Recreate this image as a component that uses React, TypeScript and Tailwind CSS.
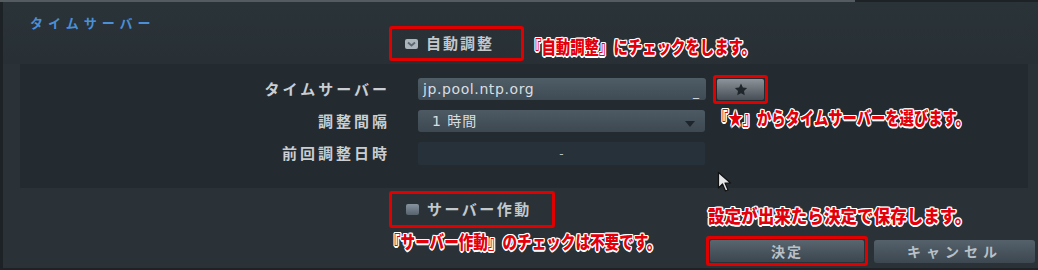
import React from 'react';

const ui = "font-['Noto_Sans_CJK_JP',sans-serif]";
const latin = "font-['DejaVu_Sans','Noto_Sans_CJK_JP',sans-serif]";
const note =
  "inline-block origin-left font-['Noto_Sans_CJK_JP',sans-serif] font-black text-[18px] leading-[20px] text-[#e3000b] whitespace-nowrap [text-shadow:1.5px_0_#fff,-1.5px_0_#fff,0_1.5px_#fff,0_-1.5px_#fff,1px_1px_#fff,-1px_-1px_#fff,1px_-1px_#fff,-1px_1px_#fff]";

const CheckOn = () => (
  <svg width="13" height="10" viewBox="0 0 13 10">
    <rect x="0" y="0" width="13" height="10" rx="2" fill="#aab4bc" />
    <path d="M3 3.5 L6.5 6.5 L10 3.5" fill="none" stroke="#5b666e" strokeWidth="1.8" />
  </svg>
);

const CheckOff = () => (
  <svg width="13" height="11" viewBox="0 0 13 11">
    <defs>
      <linearGradient id="cb" x1="0" y1="0" x2="0" y2="1">
        <stop offset="0" stopColor="#8694a0" />
        <stop offset="1" stopColor="#56626c" />
      </linearGradient>
    </defs>
    <rect x="0" y="0" width="13" height="11" rx="2" fill="url(#cb)" />
  </svg>
);

const Star = () => (
  <svg width="14" height="13" viewBox="0 0 24 23">
    <path d="M12 1l3.3 6.9 7.5 1-5.5 5.2 1.4 7.5L12 18l-6.7 3.6 1.4-7.5L1.2 8.9l7.5-1z" fill="#1f272d" />
  </svg>
);

const Cursor = () => (
  <svg width="16" height="22" viewBox="0 0 16 22">
    <path d="M1.5 1.5 L1.5 17 L5.5 13 L8.5 20 L11 19 L8 12 L13.5 12 Z" fill="#e4e6e8" stroke="#111" strokeWidth="1.2" strokeLinejoin="round" />
  </svg>
);

const Label = ({ children }: { children: React.ReactNode }) => (
  <div className={`${ui} w-[370px] text-right text-[15px] font-bold tracking-[3px] text-[#caced2]`}>{children}</div>
);

export default function App() {
  return (
    <div className="w-[1038px] h-[270px] bg-[#2a3237] overflow-hidden flex flex-col relative">
      <div className="h-[2px] flex">
        <div className="w-[855px] bg-[#545c62]" />
        <div className="flex-1 bg-[#1c2226]" />
      </div>

      <div className="flex-1 flex flex-col border-l-[3px] border-[#1c2226]">
        {/* header */}
        <div className="h-[62px] flex bg-gradient-to-b from-[#2a3338] to-[#283035]">
          <div className={`${ui} w-[386px] pl-[27px] pt-[14px] text-[13px] leading-[14px] font-bold tracking-[5px] text-[#4b8fd6]`}>
            タイムサーバー
          </div>
          <div className="mt-[24px] w-[135px] h-[35px] border-[3px] border-[#e10000] rounded-[3px] flex items-center pl-[13px] gap-[8px]">
            <CheckOn />
            <span className={`${ui} text-[15px] font-bold tracking-[2px] text-[#c3c8cc]`}>自動調整</span>
          </div>
          <div className="mt-[34px] ml-[3px]">
            <span className={`${note} scale-x-[0.8]`}>『自動調整』にチェックをします。</span>
          </div>
        </div>

        {/* panel */}
        <div className="ml-[17px] w-[1008px] h-[124px] bg-[#232b30] pt-[14px] flex flex-col gap-[10px] relative">
          <div className="flex items-center h-[22px]">
            <Label>タイムサーバー</Label>
            <div className="ml-[28px] w-[288px] h-[22px] rounded-[3px] bg-gradient-to-b from-[#4f5d67] to-[#3f4b54] flex items-center justify-between pl-[5px] pr-[7px]">
              <span className={`${latin} text-[14px] tracking-[0.6px] text-[#d9dee1]`}>jp.pool.ntp.org</span>
              <span className={`${latin} text-[12px] self-end leading-[16px] text-[#d9dee1]`}>_</span>
            </div>
            <div className="ml-[7px] w-[55px] h-[29px] border-[3px] border-[#e10000] rounded-[3px] p-[1px] flex">
              <div className="flex-1 rounded-[2px] bg-gradient-to-b from-[#8d949a] to-[#474e55] flex items-center justify-center">
                <Star />
              </div>
            </div>
          </div>

          <div className="flex items-center h-[22px]">
            <Label>調整間隔</Label>
            <div className="ml-[28px] w-[287px] h-[22px] rounded-[3px] bg-gradient-to-b from-[#4d5a64] to-[#3d4851] flex items-center justify-between pl-[14px] pr-[10px]">
              <span className={`${latin} text-[14px] tracking-[1px] text-[#d9dee1]`}>1 時間</span>
              <svg width="10" height="6" viewBox="0 0 10 6" className="mt-[6px]">
                <path d="M0 0 L10 0 L5 6 Z" fill="#1e262c" />
              </svg>
            </div>
          </div>

          <div className="flex items-center h-[23px]">
            <Label>前回調整日時</Label>
            <div className="ml-[28px] w-[287px] h-[23px] rounded-[2px] bg-[#27313a] flex items-center justify-center">
              <span className={`${latin} text-[12px] text-[#b8bfc4]`}>-</span>
            </div>
          </div>

          <div className="absolute left-[694px] top-[43px]">
            <span className={`${note} scale-x-[0.795]`}>『★』からタイムサーバーを選びます。</span>
          </div>
        </div>

        {/* bottom */}
        <div className="flex-1 flex">
          <div className="ml-[383px] w-[320px] flex flex-col">
            <div className="ml-[3px] mt-[3px] w-[166px] h-[37px] border-[3px] border-[#e10000] rounded-[3px] flex items-center pl-[14px] gap-[8px]">
              <CheckOff />
              <span className={`${ui} text-[15px] font-bold tracking-[2.5px] text-[#c3c8cc]`}>サーバー作動</span>
            </div>
            <div className="mt-[3px]">
              <span className={`${note} scale-x-[0.81]`}>『サーバー作動』のチェックは不要です。</span>
            </div>
          </div>
          <div className="flex flex-col">
            <div className="mt-[17px] ml-[2px]">
              <span className={`${note} scale-x-[0.92]`}>設定が出来たら決定で保存します。</span>
            </div>
            <div className="mt-[7px] flex items-center">
              <div className="w-[162px] h-[30px] border-[3px] border-[#e10000] rounded-[3px] p-[1px] flex">
                <div className="flex-1 rounded-[2px] bg-gradient-to-b from-[#59656f] to-[#3b464f] flex items-center justify-center">
                  <span className={`${ui} text-[14px] font-bold tracking-[2px] text-[#b9c0c6]`}>決定</span>
                </div>
              </div>
              <div className="ml-[6px] w-[161px] h-[23px] rounded-[3px] bg-gradient-to-b from-[#55616b] to-[#3c4750] flex items-center justify-center">
                <span className={`${ui} text-[14px] font-bold tracking-[5px] text-[#b9c0c6]`}>キャンセル</span>
              </div>
            </div>
          </div>
        </div>
      </div>

      <div className="h-[2px] bg-[#1c2226]" />

      <div className="absolute left-[717px] top-[171px]">
        <Cursor />
      </div>
    </div>
  );
}
